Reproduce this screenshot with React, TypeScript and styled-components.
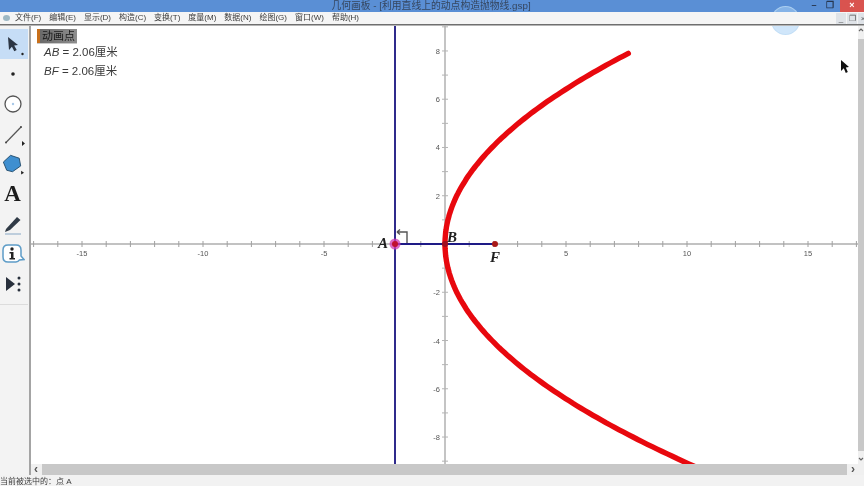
import React from 'react';
import styled, { createGlobalStyle } from 'styled-components';

const GlobalStyle = createGlobalStyle`
  html, body {
    margin: 0;
    padding: 0;
    overflow: hidden;
    background: #ffffff;
  }
`;

const cjk = `"Liberation Sans", "Noto Sans CJK SC", sans-serif`;

const Window = styled.div`
  position: relative;
  width: 864px;
  height: 486px;
  display: flex;
  flex-direction: column;
  overflow: hidden;
  font-family: ${cjk};
  filter: blur(0.45px);
`;

const TitleBar = styled.div`
  height: 12px;
  flex: none;
  background: #5a8fd5;
  display: flex;
  align-items: center;
  justify-content: space-between;
`;

const TitleText = styled.div`
  flex: 1;
  padding-left: 56px;
  text-align: center;
  font-size: 9.8px;
  line-height: 12px;
  color: #35465f;
  white-space: nowrap;
`;

const WindowButtons = styled.div`
  display: flex;
  align-items: center;
  height: 12px;
`;

const CaptionButton = styled.div<{ $close?: boolean }>`
  width: ${(p) => (p.$close ? '24px' : '16px')};
  height: 12px;
  margin-left: ${(p) => (p.$close ? '2px' : '0')};
  background: ${(p) => (p.$close ? '#d9534f' : 'transparent')};
  color: ${(p) => (p.$close ? '#ffffff' : '#26364f')};
  font-size: 9px;
  font-weight: bold;
  line-height: 10px;
  text-align: center;
`;

const MenuBar = styled.div`
  height: 12px;
  flex: none;
  background: #f5f5f5;
  border-bottom: 1px solid #6f6f6f;
  display: flex;
  align-items: center;
  padding-left: 3px;
  box-shadow: 0 1px 0 #b5b5b5;
  z-index: 1;
`;

const MenuIcon = styled.span`
  width: 7px;
  height: 6px;
  margin-right: 5px;
  border-radius: 50%;
  background: #9db8c4;
`;

const MenuItems = styled.div`
  display: flex;
  gap: 8px;
  flex: 1;
`;

const MenuItem = styled.span`
  font-size: 8px;
  line-height: 12px;
  color: #3c3c3c;
  white-space: nowrap;
`;

const MdiButtons = styled.div`
  display: flex;
  gap: 1px;
  height: 11px;
  margin-right: -4px;
`;

const MdiButton = styled.div`
  width: 10px;
  height: 11px;
  background: #dfe3e8;
  color: #555555;
  font-size: 8px;
  line-height: 11px;
  text-align: center;
`;

const Body = styled.div`
  flex: 1;
  min-height: 0;
  display: flex;
`;

const Toolbox = styled.div`
  width: 31px;
  flex: none;
  background: #f3f3f3;
  border-right: 2px solid #a4a4a4;
  display: flex;
  flex-direction: column;
  align-items: stretch;
  padding: 4px 1px 0 0;
  box-sizing: border-box;
  height: 100%;
`;

const Tool = styled.div<{ $active?: boolean }>`
  height: 30px;
  flex: none;
  display: flex;
  align-items: center;
  justify-content: center;
  padding-right: 3px;
  background: ${(p) => (p.$active ? '#c6ddf6' : 'transparent')};
  box-sizing: border-box;
`;

const ToolDivider = styled.div`
  height: 1px;
  margin-top: 5px;
  background: #dcdcdc;
`;

const TextTool = styled.span`
  font-family: "Liberation Serif", serif;
  font-weight: bold;
  font-size: 23px;
  line-height: 30px;
  color: #1c1c1c;
`;

const Main = styled.div`
  flex: 1;
  min-width: 0;
  display: grid;
  grid-template-columns: 1fr 6px;
  grid-template-rows: 1fr 11px;
`;

const Canvas = styled.div`
  position: relative;
  background: #ffffff;
  overflow: hidden;
`;

const Plot = styled.svg`
  display: block;
  width: 827px;
  height: 439px;
`;

const Readout = styled.div`
  position: absolute;
  left: 6px;
  top: 4px;
  display: flex;
  flex-direction: column;
  align-items: flex-start;
`;

const AnimateButton = styled.div`
  height: 14px;
  padding: 0 2px;
  border-left: 3px solid #c8701c;
  background: linear-gradient(90deg, #6a6a6a, #8e8e8e);
  color: #1a1a1a;
  font-size: 11px;
  line-height: 14px;
  box-shadow: 0 1px 0 #c9c9c9;
`;

const Measure = styled.div`
  margin-left: 7px;
  margin-top: 2px;
  font-size: 11.5px;
  line-height: 14px;
  color: #3a3a3a;
  white-space: nowrap;

  & + & {
    margin-top: 5px;
  }

  i {
    font-style: italic;
  }
`;

const VScroll = styled.div`
  background: #f0f0f0;
  display: flex;
  flex-direction: column;
  justify-content: space-between;
  align-items: center;
`;

const VThumb = styled.div`
  flex: 1;
  width: 6px;
  margin: 4px 0 3px;
  background: #c8c8c8;
`;

const Chevron = styled.svg`
  flex: none;
  width: 6px;
  height: 6px;
  margin-top: 2px;
  margin-bottom: 2px;
`;

const HScroll = styled.div`
  background: #f0f0f0;
  display: flex;
  align-items: center;
  padding: 0 11px 0 11px;
  position: relative;
`;

const HThumb = styled.div`
  flex: 1;
  height: 11px;
  background: #c8c8c8;
`;

const ScrollArrow = styled.span<{ $right?: boolean }>`
  position: absolute;
  top: 0;
  ${(p) => (p.$right ? 'right: 3px;' : 'left: 3px;')}
  font-size: 12px;
  font-weight: bold;
  line-height: 10px;
  color: #555555;
`;

const Corner = styled.div`
  background: #f0f0f0;
`;

const StatusBar = styled.div`
  height: 11px;
  flex: none;
  background: #f2f2f2;
  font-size: 8px;
  line-height: 14px;
  color: #3c3c3c;
  white-space: nowrap;
  overflow: hidden;
`;

const Watermark = styled.div`
  position: absolute;
  left: 771px;
  top: 6px;
  width: 27px;
  height: 27px;
  border-radius: 50%;
  background: rgba(170, 210, 245, 0.55);
  border: 1px solid rgba(190, 220, 245, 0.7);
`;

const Pointer = styled.svg`
  position: absolute;
  left: 840px;
  top: 60px;
  width: 10px;
  height: 14px;
`;

// canvas origin is at (31, 25) in the window
const OX = 414;
const OY = 219;
const UX = 24.2;
const UY = 24.13;

const curve = (() => {
  const pts: string[] = [];
  for (let y = 9.3; y >= -9.3; y -= 0.1) {
    if (y > 7.92) continue;
    const x = (y * y) / 8.24;
    pts.push(`${(OX + x * UX).toFixed(1)},${(OY - y * UY).toFixed(1)}`);
  }
  return pts.join(' ');
})();

const xTicks = Array.from({ length: 35 }, (_, i) => i - 17);
const yTicks = Array.from({ length: 19 }, (_, i) => i - 9);

const Graph = () => (
  <Plot viewBox="0 0 827 439">
    <line x1="0" y1={OY} x2="827" y2={OY} stroke="#aeaeae" strokeWidth="1.5" />
    <line x1={OX} y1="0" x2={OX} y2="439" stroke="#c4c4c4" strokeWidth="2" />
    {xTicks.map((t) => (
      <line
        key={t}
        x1={OX + t * UX}
        y1={OY - 3}
        x2={OX + t * UX}
        y2={OY + 3}
        stroke="#a0a0a0"
        strokeWidth="1"
      />
    ))}
    {yTicks.map((t) => (
      <line
        key={t}
        x1={OX - 3}
        y1={OY - t * UY}
        x2={OX + 3}
        y2={OY - t * UY}
        stroke="#b4b4b4"
        strokeWidth="1"
      />
    ))}
    {[-15, -10, -5, 5, 10, 15].map((t) => (
      <text
        key={t}
        x={OX + t * UX}
        y={OY + 12}
        fontSize="7.5"
        fill="#555555"
        textAnchor="middle"
        fontFamily="Liberation Sans, sans-serif"
      >
        {t}
      </text>
    ))}
    {[8, 6, 4, 2, -2, -4, -6, -8].map((t) => (
      <text
        key={t}
        x={OX - 5}
        y={OY - t * UY + 3}
        fontSize="7.5"
        fill="#555555"
        textAnchor="end"
        fontFamily="Liberation Sans, sans-serif"
      >
        {t}
      </text>
    ))}
    <polyline points={curve} fill="none" stroke="#e8080e" strokeWidth="5.4" strokeLinecap="round" />
    <line x1="364" y1="0" x2="364" y2="439" stroke="#2f2a8c" strokeWidth="2" />
    <line x1="364" y1={OY} x2="464" y2={OY} stroke="#1e1a86" strokeWidth="2" />
    <path d="M366 207h10v11M366 207l3-2.500M366 207l3 2.500" fill="none" stroke="#555555" strokeWidth="1.400" />
    <circle cx="364" cy={OY} r="5.500" fill="#d23bb4" opacity="0.75" />
    <circle cx="364" cy={OY} r="3" fill="#c01030" />
    <circle cx={OX} cy={OY} r="3" fill="#a01020" />
    <circle cx="464" cy={OY} r="3" fill="#a81818" />
    <g fontFamily="Liberation Serif, serif" fontStyle="italic" fontWeight="bold" fontSize="15" fill="#1f1f1f">
      <text x="347" y="223">A</text>
      <text x="416" y="217">B</text>
      <text x="459" y="237">F</text>
    </g>
  </Plot>
);

const App = () => (
  <>
    <GlobalStyle />
    <Window>
      <TitleBar>
        <TitleText>几何画板 - [利用直线上的动点构造抛物线.gsp]</TitleText>
        <WindowButtons>
          <CaptionButton>–</CaptionButton>
          <CaptionButton>❐</CaptionButton>
          <CaptionButton $close>×</CaptionButton>
        </WindowButtons>
      </TitleBar>
      <MenuBar>
        <MenuIcon />
        <MenuItems>
          {[
            '文件(F)',
            '编辑(E)',
            '显示(D)',
            '构造(C)',
            '变换(T)',
            '度量(M)',
            '数据(N)',
            '绘图(G)',
            '窗口(W)',
            '帮助(H)',
          ].map((m) => (
            <MenuItem key={m}>{m}</MenuItem>
          ))}
        </MenuItems>
        <MdiButtons>
          <MdiButton>_</MdiButton>
          <MdiButton>❐</MdiButton>
          <MdiButton>×</MdiButton>
        </MdiButtons>
      </MenuBar>
      <Body>
        <Toolbox>
          <Tool $active>
            <svg width="24" height="26" viewBox="0 0 24 26">
              <path d="M7 6l10 8-3.800.6 2.500 4.400-2.400 1.300-2.400-4.600L8 19z" fill="#2c3644" />
              <circle cx="21.500" cy="23" r="1.200" fill="#222222" />
            </svg>
          </Tool>
          <Tool>
            <svg width="24" height="24" viewBox="0 0 24 24">
              <circle cx="12" cy="12" r="1.800" fill="#222222" />
            </svg>
          </Tool>
          <Tool>
            <svg width="24" height="24" viewBox="0 0 24 24">
              <circle cx="12" cy="12" r="8" fill="#ffffff" stroke="#555555" strokeWidth="1.300" />
              <circle cx="12" cy="12" r="1.200" fill="#a8c8e8" />
            </svg>
          </Tool>
          <Tool>
            <svg width="24" height="24" viewBox="0 0 24 24">
              <path d="M5 20.500L20 5" stroke="#555555" strokeWidth="1.200" />
              <circle cx="5" cy="20.500" r="1" fill="#444444" />
              <circle cx="20" cy="5" r="1" fill="#444444" />
              <path d="M21 19l3 2.500-3 2.500z" fill="#222222" />
            </svg>
          </Tool>
          <Tool>
            <svg width="26" height="26" viewBox="0 0 26 26">
              <path d="M3.500 11L11 4l9 3 1.500 8L13 21l-6-1.500z" fill="#3f8fd0" stroke="#28506f" strokeWidth="1" />
              <path d="M22 20l3 2-3 2z" fill="#222222" />
            </svg>
          </Tool>
          <Tool>
            <TextTool>A</TextTool>
          </Tool>
          <Tool>
            <svg width="24" height="24" viewBox="0 0 24 24">
              <path d="M5 17L16 5l3.500 3L9 18l-5 2z" fill="#303a46" />
              <path d="M4 22h16" stroke="#9fb8cf" strokeWidth="1.300" />
            </svg>
          </Tool>
          <Tool>
            <svg width="24" height="24" viewBox="0 0 24 24">
              <path
                d="M7 3h8c3 0 5 2 5 5v6l3 3.500-4.500.4c-1 1.600-2 2.100-3.500 2.100H7c-3 0-5-2-5-5V8c0-3 2-5 5-5z"
                fill="#ffffff"
                stroke="#5d9cc7"
                strokeWidth="1.500"
              />
              <circle cx="11" cy="7" r="1.700" fill="#222222" />
              <path d="M8.500 10h4v6h1.500v1.500H8.500V16H10v-4.500H8.500z" fill="#222222" />
            </svg>
          </Tool>
          <Tool>
            <svg width="24" height="24" viewBox="0 0 24 24">
              <path d="M5 5l9 7-9 7z" fill="#28303c" />
              <circle cx="18" cy="6" r="1.500" fill="#28303c" />
              <circle cx="18" cy="12" r="1.500" fill="#28303c" />
              <circle cx="18" cy="18" r="1.500" fill="#28303c" />
            </svg>
          </Tool>
          <ToolDivider />
        </Toolbox>
        <Main>
          <Canvas>
            <Graph />
            <Readout>
              <AnimateButton>动画点</AnimateButton>
              <Measure>
                <i>AB</i> = 2.06厘米
              </Measure>
              <Measure>
                <i>BF</i> = 2.06厘米
              </Measure>
            </Readout>
          </Canvas>
          <VScroll>
            <Chevron viewBox="0 0 6 6">
              <path d="M1 4l2-2 2 2" fill="none" stroke="#666666" strokeWidth="1.200" />
            </Chevron>
            <VThumb />
            <Chevron viewBox="0 0 6 6">
              <path d="M1 2l2 2 2-2" fill="none" stroke="#666666" strokeWidth="1.200" />
            </Chevron>
          </VScroll>
          <HScroll>
            <ScrollArrow>‹</ScrollArrow>
            <HThumb />
            <ScrollArrow $right>›</ScrollArrow>
          </HScroll>
          <Corner />
        </Main>
      </Body>
      <StatusBar>当前被选中的：点 A</StatusBar>
      <Watermark />
      <Pointer viewBox="0 0 10 14">
        <path d="M1 0l8 7-3.200.4 2 4.600-2 1-2-4.700L1 11z" fill="#111111" />
      </Pointer>
    </Window>
  </>
);

export default App;
